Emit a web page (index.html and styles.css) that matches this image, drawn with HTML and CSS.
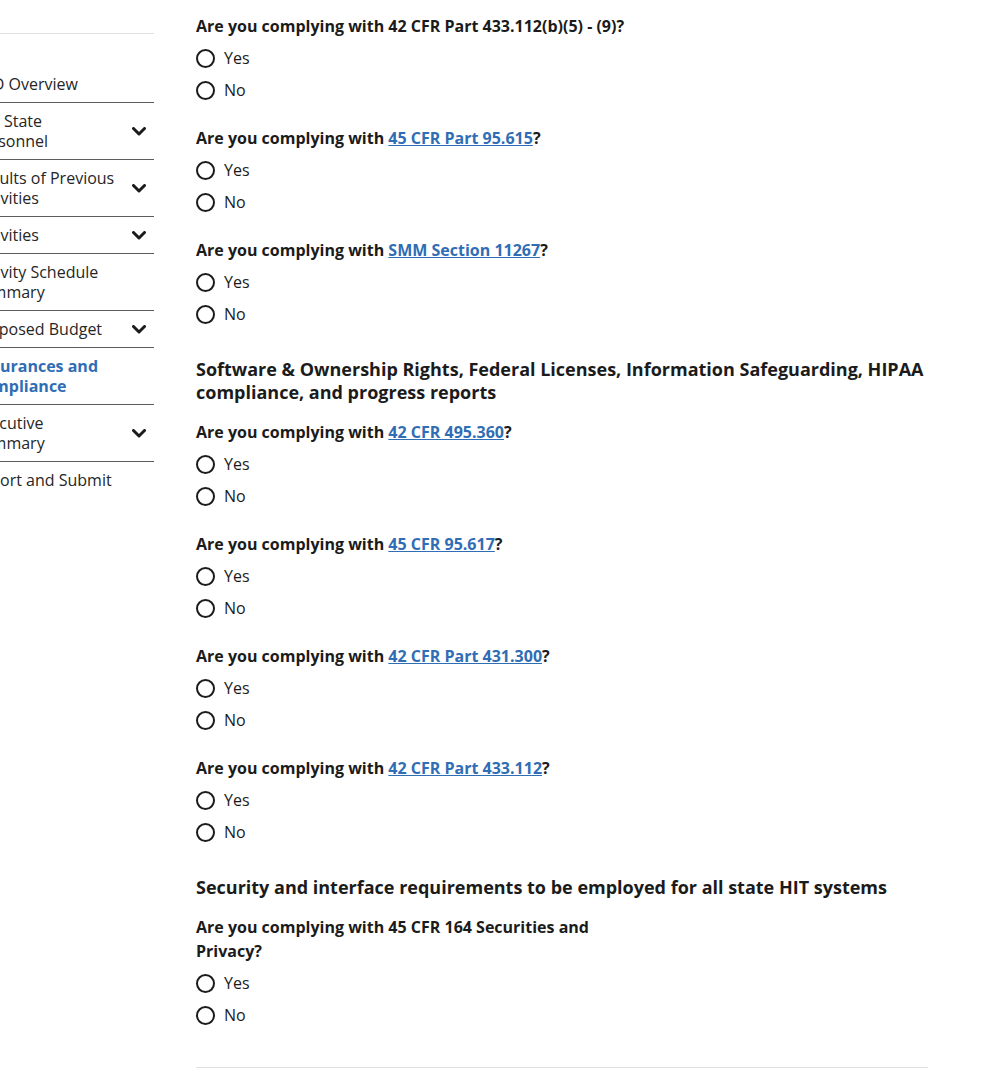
FILE: index.html
```html
<!DOCTYPE html>
<html lang="en">
<head>
<meta charset="utf-8">
<title>Assurances and Compliance</title>
<link rel="stylesheet" href="styles.css">
</head>
<body>
<div class="page">
  <aside class="sidebar">
    <div class="sidebar-top"></div>
    <ul class="nav">
      <li class="nav-item"><span class="nav-label">APD Overview</span></li>
      <li class="nav-item"><span class="nav-label">Key State Personnel</span><span class="nav-toggle"><svg width="14" height="9" viewBox="0 0 14 9"><path d="M1.5 1.5 L7 7 L12.5 1.5" fill="none" stroke="#1b1b1b" stroke-width="3" stroke-linecap="round" stroke-linejoin="round"/></svg></span></li>
      <li class="nav-item"><span class="nav-label">Results of Previous Activities</span><span class="nav-toggle"><svg width="14" height="9" viewBox="0 0 14 9"><path d="M1.5 1.5 L7 7 L12.5 1.5" fill="none" stroke="#1b1b1b" stroke-width="3" stroke-linecap="round" stroke-linejoin="round"/></svg></span></li>
      <li class="nav-item"><span class="nav-label">Activities</span><span class="nav-toggle"><svg width="14" height="9" viewBox="0 0 14 9"><path d="M1.5 1.5 L7 7 L12.5 1.5" fill="none" stroke="#1b1b1b" stroke-width="3" stroke-linecap="round" stroke-linejoin="round"/></svg></span></li>
      <li class="nav-item"><span class="nav-label">Activity Schedule Summary</span></li>
      <li class="nav-item"><span class="nav-label">Proposed Budget</span><span class="nav-toggle"><svg width="14" height="9" viewBox="0 0 14 9"><path d="M1.5 1.5 L7 7 L12.5 1.5" fill="none" stroke="#1b1b1b" stroke-width="3" stroke-linecap="round" stroke-linejoin="round"/></svg></span></li>
      <li class="nav-item active"><span class="nav-label">Assurances and Compliance</span></li>
      <li class="nav-item"><span class="nav-label">Executive Summary</span><span class="nav-toggle"><svg width="14" height="9" viewBox="0 0 14 9"><path d="M1.5 1.5 L7 7 L12.5 1.5" fill="none" stroke="#1b1b1b" stroke-width="3" stroke-linecap="round" stroke-linejoin="round"/></svg></span></li>
      <li class="nav-item last"><span class="nav-label">Export and Submit</span></li>
    </ul>
  </aside>

  <main class="content">
    <fieldset class="question">
      <legend class="q-label">Are you complying with 42 CFR Part 433.112(b)(5) - (9)?</legend>
      <label class="option"><span class="radio"></span>Yes</label>
      <label class="option"><span class="radio"></span>No</label>
    </fieldset>
    <fieldset class="question">
      <legend class="q-label">Are you complying with <a href="#">45 CFR Part 95.615</a>?</legend>
      <label class="option"><span class="radio"></span>Yes</label>
      <label class="option"><span class="radio"></span>No</label>
    </fieldset>
    <fieldset class="question">
      <legend class="q-label">Are you complying with <a href="#">SMM Section 11267</a>?</legend>
      <label class="option"><span class="radio"></span>Yes</label>
      <label class="option"><span class="radio"></span>No</label>
    </fieldset>

    <h3 class="section-title">Software &amp; Ownership Rights, Federal Licenses, Information Safeguarding, HIPAA compliance, and progress reports</h3>
    <fieldset class="question">
      <legend class="q-label">Are you complying with <a href="#">42 CFR 495.360</a>?</legend>
      <label class="option"><span class="radio"></span>Yes</label>
      <label class="option"><span class="radio"></span>No</label>
    </fieldset>
    <fieldset class="question">
      <legend class="q-label">Are you complying with <a href="#">45 CFR 95.617</a>?</legend>
      <label class="option"><span class="radio"></span>Yes</label>
      <label class="option"><span class="radio"></span>No</label>
    </fieldset>
    <fieldset class="question">
      <legend class="q-label">Are you complying with <a href="#">42 CFR Part 431.300</a>?</legend>
      <label class="option"><span class="radio"></span>Yes</label>
      <label class="option"><span class="radio"></span>No</label>
    </fieldset>
    <fieldset class="question">
      <legend class="q-label">Are you complying with <a href="#">42 CFR Part 433.112</a>?</legend>
      <label class="option"><span class="radio"></span>Yes</label>
      <label class="option"><span class="radio"></span>No</label>
    </fieldset>

    <h3 class="section-title">Security and interface requirements to be employed for all state HIT systems</h3>
    <fieldset class="question">
      <legend class="q-label">Are you complying with 45 CFR 164 Securities and Privacy?</legend>
      <label class="option"><span class="radio"></span>Yes</label>
      <label class="option"><span class="radio"></span>No</label>
    </fieldset>

    <hr class="divider">
  </main>
</div>
</body>
</html>
```

FILE: styles.css
```css
html, body {
  margin: 0;
  padding: 0;
}

body {
  font-family: "Open Sans", "Liberation Sans", sans-serif;
  color: #1b1b1b;
  background: #ffffff;
  overflow: hidden;
}

.page {
  display: flex;
  align-items: flex-start;
}

.sidebar {
  width: 181px;
  margin-left: -27px;
  flex-shrink: 0;
  padding-top: 33px;
}

.sidebar-top {
  border-top: 1px solid #dfe1e2;
  margin-bottom: 32px;
}

.nav {
  list-style: none;
  margin: 0;
  padding: 0;
}

.nav-item {
  display: flex;
  align-items: center;
  padding: 8px 0;
  border-bottom: 1px solid #5c5c5c;
  font-size: 16px;
  line-height: 20px;
  color: #262626;
}

.nav-item.last {
  border-bottom: none;
}

.nav-label {
  flex: 1;
  min-width: 0;
}

.nav-toggle {
  width: 37.5px;
  flex-shrink: 0;
  display: flex;
  justify-content: flex-end;
  padding-right: 8px;
  box-sizing: border-box;
}

.nav-toggle svg {
  display: block;
}

.nav-item.active {
  color: #2f6db5;
  font-weight: 700;
}

.content {
  margin-left: 42px;
  width: 732px;
  padding-top: 14px;
}

.question {
  border: 0;
  margin: 0 0 24px 0;
  padding: 0;
  min-width: 0;
}

.q-label {
  padding: 0;
  max-width: 445px;
  font-size: 16px;
  line-height: 24px;
  font-weight: 700;
}

.q-label a {
  color: #2f6db5;
  text-decoration: underline;
}

.option {
  display: flex;
  align-items: center;
  margin-top: 8px;
  height: 24px;
  font-size: 16px;
  line-height: 24px;
}

.radio {
  width: 19px;
  height: 19px;
  box-sizing: border-box;
  border: 2px solid #1b1b1b;
  border-radius: 50%;
  margin-right: 9px;
  flex-shrink: 0;
}

.section-title {
  font-size: 18px;
  line-height: 23px;
  font-weight: 700;
  margin: 31.5px 0 16.5px 0;
}

.divider {
  border: 0;
  border-top: 1px solid #dfe1e2;
  margin: 40px 0 0 0;
}
```
